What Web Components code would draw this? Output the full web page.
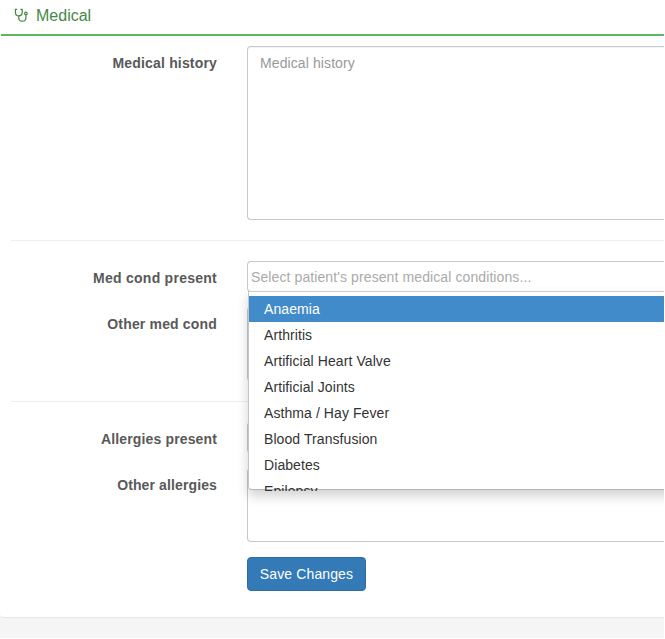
<!DOCTYPE html>
<html lang="en">
<head>
<meta charset="utf-8">
<title>Medical</title>
<style>
html,body{margin:0;height:639px;overflow:hidden;background:#fff}
body{font:14px/20px "Liberation Sans",Arial,sans-serif;color:#555}
</style>
</head>
<body>
<medical-panel>
  <panel-title slot="title">Medical</panel-title>
  <form-row label="Medical history" gap="20" tracking=".17"><text-area h="174">Medical history</text-area></form-row>
  <rule-line></rule-line>
  <form-row label="Med cond present" gap="15" tracking=".26">
    <multi-select placeholder="Select patient's present medical conditions...">
      <option-item active>Anaemia</option-item>
      <option-item>Arthritis</option-item>
      <option-item>Artificial Heart Valve</option-item>
      <option-item>Artificial Joints</option-item>
      <option-item>Asthma / Hay Fever</option-item>
      <option-item>Blood Transfusion</option-item>
      <option-item>Diabetes</option-item>
      <option-item>Epilepsy</option-item>
    </multi-select>
  </form-row>
  <form-row label="Other med cond" gap="20" tracking=".17"><text-area h="74"></text-area></form-row>
  <rule-line></rule-line>
  <form-row label="Allergies present" gap="15" tracking=".14"><multi-select></multi-select></form-row>
  <form-row label="Other allergies" gap="15" tracking=".12"><text-area h="74"></text-area></form-row>
  <form-row label="" gap="0"><save-button>Save Changes</save-button></form-row>
</medical-panel>
<script>
const define = (name, markup, setup) => customElements.define(name, class extends HTMLElement {
  constructor() {
    super();
    this.attachShadow({ mode: 'open' }).innerHTML = markup;
  }
  connectedCallback() { if (setup) setup(this, this.shadowRoot); }
});

define('medical-panel', `<style>
  :host{display:block;box-sizing:border-box;width:664px;height:638px;background:#f5f5f5;overflow:hidden}
  section{box-sizing:border-box;height:618px;background:#fff;border-bottom:1px solid #e7e7e7;border-bottom-left-radius:4px}
  .body{padding:10px 0 0 11px}
</style><section><slot name="title"></slot><div class="body"><slot></slot></div></section>`);

define('panel-title', `<style>
  :host{display:flex;box-sizing:border-box;height:36px;margin-left:1px;padding:6px 0 0 13px;border-bottom:2px solid #5cb85c;color:#468847;font-size:16px;line-height:20px}
  svg{width:15px;height:15px;margin:2px 7px 0 0;flex:none}
</style><svg viewBox="0 0 15 15" fill="none" stroke="currentColor" stroke-width="1.2" stroke-linecap="round">
  <path d="M2.8 1.3H1.4V4.2C1.4 6.7 2.9 7.9 4.8 7.9S8.2 6.7 8.2 4.2V1.3H6.8"/>
  <path d="M4.8 8V10C4.8 12.3 6.2 13.2 8.2 13.2S11.9 12.2 11.9 10V6.8"/>
  <circle cx="11.9" cy="5.4" r="1.3"/></svg><slot></slot>`);

define('form-row', `<style>
  :host{display:grid;grid-template-columns:206px minmax(0,1fr);column-gap:30px}
  label{padding-top:7px;text-align:right;font-weight:700;color:#595959}
</style><label></label><div><slot></slot></div>`, (el, root) => {
  const label = root.querySelector('label');
  label.textContent = el.getAttribute('label');
  label.style.letterSpacing = (el.getAttribute('tracking') || 0) + 'px';
  el.style.marginBottom = el.getAttribute('gap') + 'px';
});

define('text-area', `<style>
  :host{display:block;box-sizing:border-box;padding:6px 12px;border:1px solid #c8c8c8;border-right:0;border-radius:4px 0 0 4px;background:#fff;color:#999;letter-spacing:.1px;box-shadow:inset 0 1px 1px rgba(0,0,0,.05)}
</style><slot></slot>`, el => { el.style.height = el.getAttribute('h') + 'px'; });

define('rule-line', `<style>:host{display:block;height:1px;margin-bottom:20px;background:#eee}</style>`);

define('multi-select', `<style>
  :host{display:block;position:relative;height:31px}
  .box{box-sizing:border-box;height:31px;padding:5px 3px;border:1px solid #c8c8c8;border-right:0;border-radius:4px 0 0 4px;background:#fff;color:#aaa;letter-spacing:.1px}
  .menu{position:absolute;z-index:2;left:1px;right:-20px;top:30px;box-sizing:border-box;height:199px;padding-top:4px;border:1px solid #b5b5b5;border-top-color:#ccc;border-left-color:#c4c4c4;border-radius:0 0 0 4px;background:#fff;box-shadow:0 6px 12px rgba(0,0,0,.18)}
  .list{height:195px;overflow:hidden}
</style><div class="box"></div><div class="menu"><div class="list"><slot></slot></div></div>`, (el, root) => {
  root.querySelector('.box').textContent = el.getAttribute('placeholder') || '';
  if (!el.hasAttribute('placeholder')) root.querySelector('.menu').remove();
});

define('option-item', `<style>
  :host{display:block;padding:3px 15px;color:#333;letter-spacing:.08px}
  :host([active]){background:#428bca;color:#fff}
</style><slot></slot>`);

define('save-button', `<style>
  :host{display:block}
  button{display:block;box-sizing:border-box;width:119px;height:34px;padding:0;border:1px solid #2e6da4;border-radius:4px;background:#337ab7;color:#fff;font:inherit;letter-spacing:.12px}
</style><button type="button"><slot></slot></button>`);
</script>
</body>
</html>
